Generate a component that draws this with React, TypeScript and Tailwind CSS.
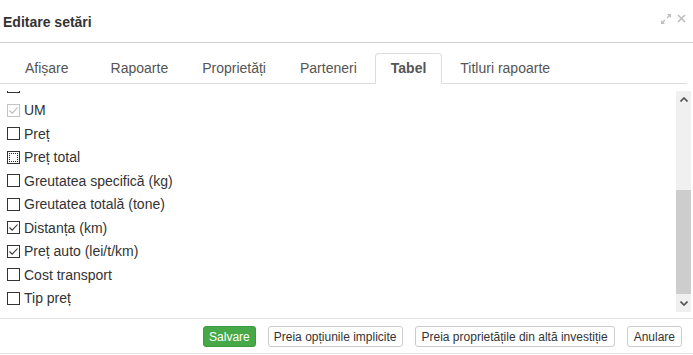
import { useState } from "react";

type Item = { label: string; checked: boolean; disabled?: boolean; focused?: boolean };

// first row is scrolled out of view, only its checkbox edge peeks in
const items: Item[] = [
  { label: "", checked: true },
  { label: "UM", checked: true, disabled: true },
  { label: "Preț", checked: false },
  { label: "Preț total", checked: false, focused: true },
  { label: "Greutatea specifică (kg)", checked: false },
  { label: "Greutatea totală (tone)", checked: false },
  { label: "Distanța (km)", checked: true },
  { label: "Preț auto (lei/t/km)", checked: true },
  { label: "Cost transport", checked: false },
  { label: "Tip preț", checked: false },
];

const tabs = ["Afișare", "Rapoarte", "Proprietăți", "Parteneri", "Tabel", "Titluri rapoarte"];

function Checkbox({ checked, disabled, focused }: { checked: boolean; disabled?: boolean; focused?: boolean }) {
  return (
    <span
      className={
        "relative flex h-[13px] w-[13px] shrink-0 items-center justify-center bg-white border " +
        (disabled ? "border-[#c4c4c4]" : "border-[#333]")
      }
    >
      {focused && <span className="absolute inset-[1px] border border-dotted border-[#222]" />}
      {checked && (
        <svg width="11" height="11" viewBox="0 0 11 11">
          <path
            d="M1.5 5.5 L4.2 8.2 L9.5 2.5"
            fill="none"
            stroke={disabled ? "#b8b8b8" : "#333"}
            strokeWidth="1.1"
          />
        </svg>
      )}
    </span>
  );
}

export default function App() {
  const [active, setActive] = useState("Tabel");

  return (
    <div className="w-[693px] h-[355px] overflow-hidden bg-white text-[#333] font-['Liberation_Sans',Arial,sans-serif] flex flex-col">
      {/* header */}
      <div className="h-[43px] shrink-0 border-b border-[#cfcfcf] flex items-center justify-between pl-[3px] pr-[7px]">
        <h1 className="text-[14px] font-bold leading-none mt-[1px] text-[#333]">Editare setări</h1>
        <div className="flex items-center gap-[5px] -mt-[5px]">
          <svg width="12" height="12" viewBox="0 0 12 12">
            <path d="M7 1 H11 V5 Z" fill="#bdbdbd" />
            <path d="M1 7 V11 H5 Z" fill="#bdbdbd" />
            <path d="M9.5 2.5 L7 5 M2.5 9.5 L5 7" stroke="#bdbdbd" strokeWidth="1.4" />
          </svg>
          <svg width="9" height="9" viewBox="0 0 9 9">
            <path d="M1 1 L8 8 M8 1 L1 8" stroke="#bdbdbd" strokeWidth="1.6" />
          </svg>
        </div>
      </div>

      {/* tabs */}
      <div className="mt-[10px] mr-[6px] shrink-0 flex border-b border-[#ddd] pl-[9px]">
        {tabs.map((t, i) => (
          <button
            key={t}
            onClick={() => setActive(t)}
            className={
              "-mb-px mr-[2px] pl-[15px] py-[5px] leading-[19px] text-[14px] border rounded-t-[4px] " +
              (i === 0 ? "pr-[23px] " : "pr-[15px] ") +
              (active === t
                ? "border-[#ddd] border-b-white bg-white font-bold text-[#555]"
                : "border-transparent text-[#555]")
            }
          >
            {t}
          </button>
        ))}
      </div>

      {/* list */}
      <div className="flex-1 min-h-0 flex pt-[7px] pb-[6px] pr-[2px]">
        <div className="flex-1 min-h-0 overflow-hidden flex flex-col justify-end pl-[7px] pb-[2px]">
          {items.map((it, i) => (
            <label key={i} className="h-[23.5px] shrink-0 flex items-center gap-[4px] text-[14px] text-[#333]">
              <Checkbox checked={it.checked} disabled={it.disabled} focused={it.focused} />
              <span className="leading-none">{it.label}</span>
            </label>
          ))}
        </div>
        <div className="w-[15px] shrink-0 bg-[#f0f0f0] flex flex-col">
          <div className="h-[17px] flex items-center justify-center">
            <svg width="8" height="5" viewBox="0 0 8 5">
              <path d="M0.5 4.5 L4 1 L7.5 4.5" fill="none" stroke="#505050" strokeWidth="1.6" />
            </svg>
          </div>
          <div className="flex-1 flex flex-col pt-[82px]">
            <div className="h-[104px] bg-[#cdcdcd]" />
          </div>
          <div className="h-[17px] flex items-center justify-center">
            <svg width="8" height="5" viewBox="0 0 8 5">
              <path d="M0.5 0.5 L4 4 L7.5 0.5" fill="none" stroke="#505050" strokeWidth="1.6" />
            </svg>
          </div>
        </div>
      </div>

      {/* footer */}
      <div className="shrink-0 border-t border-b border-[#e0e0e0] flex justify-end gap-[12px] pt-[7px] pb-[6px] pr-[11px] mb-[1px]">
        <button className="h-[21px] px-[5px] rounded-[3px] border border-[#3e9a3e] bg-[#46a846] text-white text-[12px] leading-none">
          Salvare
        </button>
        <button className="h-[21px] px-[5px] rounded-[3px] border border-[#ccc] bg-white text-[#333] text-[12px] leading-none">
          Preia opțiunile implicite
        </button>
        <button className="h-[21px] px-[6px] rounded-[3px] border border-[#ccc] bg-white text-[#333] text-[12px] leading-none">
          Preia proprietățile din altă investiție
        </button>
        <button className="h-[21px] px-[6px] rounded-[3px] border border-[#ccc] bg-white text-[#333] text-[12px] leading-none">
          Anulare
        </button>
      </div>
    </div>
  );
}
